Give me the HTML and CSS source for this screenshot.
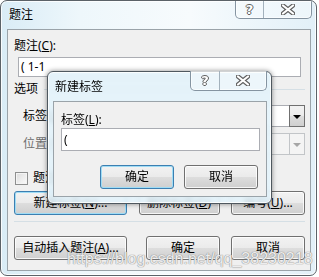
FILE: index.html
```html
<!DOCTYPE html>
<html lang="zh-CN">
<head>
    <meta charset="UTF-8">
    <title>题注</title>
    <link rel="stylesheet" href="styles.css">
</head>
<body>
    <div class="win">
        <div class="bar">
            <span class="title">题注</span>
            <div class="caps">
                <span class="cap cap-help">?</span>
                <span class="cap cap-close">
                    <svg width="14" height="11" viewBox="0 0 14 11"><path d="M2 1.5L12 9.5M12 1.5L2 9.5" stroke="#5e5e5e" stroke-width="4.4" stroke-linecap="round"/><path d="M2 1.5L12 9.5M12 1.5L2 9.5" stroke="#fff" stroke-width="2.2" stroke-linecap="round"/></svg>
                </span>
            </div>
        </div>
        <div class="panel">
            <div class="lbl">题注(<u>C</u>):</div>
            <div class="field cap-field">( 1-1</div>
            <div class="group"><span>选项</span><i class="rule"></i></div>
            <div class="row">
                <span class="row-lbl">标签(<u>L</u>):</span>
                <div class="combo">(<b class="drop"><i class="tri"></i></b></div>
            </div>
            <div class="row row-off">
                <span class="row-lbl">位置(<u>P</u>):</span>
                <div class="combo combo-off"><b class="drop"><i class="tri"></i></b></div>
            </div>
            <div class="check"><i class="box"></i><span>题注中不包含标签(<u>E</u>)</span></div>
            <div class="btns">
                <span class="btn btn-focus w113">新建标签(<u>N</u>)...</span>
                <span class="btn w81">删除标签(<u>D</u>)</span>
                <span class="btn w74">编号(<u>U</u>)...</span>
            </div>
            <div class="sep"></div>
            <div class="btns btns-end">
                <span class="btn w113">自动插入题注(<u>A</u>)...</span>
                <span class="btn w74 push">确定</span>
                <span class="btn w74">取消</span>
            </div>
        </div>

        <div class="dlg">
            <div class="bar dlg-bar">
                <span class="title">新建标签</span>
                <div class="caps">
                    <span class="cap cap-help dlg-help">?</span>
                    <span class="cap cap-close dlg-close">
                        <svg width="14" height="11" viewBox="0 0 14 11"><path d="M2 1.5L12 9.5M12 1.5L2 9.5" stroke="#5e5e5e" stroke-width="4.4" stroke-linecap="round"/><path d="M2 1.5L12 9.5M12 1.5L2 9.5" stroke="#fff" stroke-width="2.2" stroke-linecap="round"/></svg>
                    </span>
                </div>
            </div>
            <div class="dlg-panel">
                <div class="lbl">标签(<u>L</u>):</div>
                <div class="field dlg-field">(</div>
                <div class="dlg-btns">
                    <span class="btn btn-focus w74">确定</span>
                    <span class="btn w74">取消</span>
                </div>
            </div>
        </div>

        <div class="mark">https://blog.csdn.net/qq_38230218</div>
    </div>
</body>
</html>
```

FILE: styles.css
```css
*{
    margin: 0;
    padding: 0;
    box-sizing: border-box;
}
body{
    background: #fff;
    font: 12px/16px "Noto Sans", "Noto Sans CJK SC", sans-serif;
    color: #000;
}
u{
    text-decoration: underline;
    text-underline-offset: 1px;
}

/* outer window */
.win{
    position: relative;
    width: 317px;
    height: 276px;
    border: 1px solid #5b6268;
    border-radius: 7px;
    padding: 0 5px 0 6px;
    background: linear-gradient(90deg, #d9ecf6, #eef7fb 25%, #f7fbfd 60%, #e2f0f8);
    box-shadow: inset 0 0 0 1px rgba(255,255,255,.8);
    overflow: hidden;
}
.bar{
    height: 28px;
    display: flex;
    align-items: flex-start;
}
.title{
    margin: 6px 0 0 2px;
}
.caps{
    display: flex;
    margin: -1px -1px 0 auto;
    height: 19px;
    border: 1px solid #8594a1;
    border-top: none;
    border-radius: 0 0 5px 5px;
    background: rgba(255,255,255,.35);
    box-shadow: inset 0 0 0 1px rgba(255,255,255,.6);
}
.cap{
    display: flex;
    align-items: center;
    justify-content: center;
}
.cap-help{
    width: 27px;
    font: bold 13px/1 "DejaVu Sans", sans-serif;
    color: #fff;
    text-shadow: 1px 0 #5e5e5e, -1px 0 #5e5e5e, 0 1px #5e5e5e, 0 -1px #5e5e5e;
}
.cap-close{
    width: 48px;
    border-left: 1px solid #a3b1bc;
}

/* dialog body */
.panel{
    height: 242px;
    border: 1px solid #9aa3a9;
    background: #f0f0f0;
    padding: 8px 5px 0 6px;
}
.field{
    background: #fff;
    border: 1px solid #abadb3;
    padding-left: 2px;
    display: flex;
    align-items: center;
}
.cap-field{
    height: 20px;
    margin: 3px 4px 0;
}
.group{
    display: flex;
    align-items: center;
    margin-top: 4px;
}
.rule{
    flex: 1;
    height: 1px;
    margin: 1px 0 0 6px;
    background: #d5dfe5;
}
.row{
    display: flex;
    align-items: center;
    margin-top: 8px;
}
.row + .row{
    margin-top: 6px;
}
.row-lbl{
    padding-left: 9px;
}
.row-off .row-lbl{
    color: #6d6d6d;
}
.combo{
    display: flex;
    align-items: center;
    width: 234px;
    height: 22px;
    margin-left: auto;
    padding-left: 3px;
    background: #fff;
    border: 1px solid #abadb3;
}
.drop{
    display: flex;
    align-items: center;
    justify-content: center;
    width: 16px;
    height: 22px;
    margin: 0 -1px 0 auto;
    border: 1px solid #707070;
    background: linear-gradient(#f2f2f2, #ebebeb 50%, #dddddd 50%, #cfcfcf);
}
.tri{
    border: 4px solid transparent;
    border-top: 4px solid #000;
    border-bottom: none;
    margin-top: 1px;
}
.combo-off{
    background: #f4f4f4;
    border-color: #c2c5c8;
}
.combo-off .drop{
    border-color: #c2c5c8;
    background: #f4f4f4;
}
.combo-off .tri{
    border-top-color: #a6a6a6;
}
.check{
    display: flex;
    align-items: center;
    margin-top: 15px;
}
.box{
    width: 13px;
    height: 13px;
    margin: 0 5px 0 1px;
    border: 1px solid #8e8f8f;
    background: linear-gradient(135deg, #dcdcdc, #fbfbfb);
    box-shadow: inset 0 0 0 1px #f4f4f4;
}
.btns{
    display: flex;
    justify-content: space-between;
    margin-top: 5px;
}
.btns-end{
    justify-content: flex-start;
    gap: 11px;
    margin-top: 14px;
}
.push{
    margin-left: auto;
}
.sep{
    height: 1px;
    margin-top: 6px;
    background: #d5dfe5;
}
.btn{
    display: flex;
    align-items: center;
    justify-content: center;
    height: 24px;
    border: 1px solid #707070;
    border-radius: 3px;
    background: linear-gradient(#f2f2f2, #ebebeb 48%, #dddddd 52%, #cfcfcf);
    box-shadow: inset 0 0 0 1px rgba(255,255,255,.8);
    white-space: nowrap;
}
.btn-focus{
    border-color: #3c7fb1;
    box-shadow: inset 0 0 0 1px #9fdcf5;
}
.w113{ width: 113px; }
.w81{ width: 81px; }
.w74{ width: 74px; }

/* new label dialog on top */
.dlg{
    position: absolute;
    left: 46px;
    top: 70px;
    width: 225px;
    height: 133px;
    padding: 0 4px 6px 5px;
    border: 1px solid #4f585f;
    border-radius: 6px;
    background: rgba(226,242,250,.88);
    backdrop-filter: blur(2px);
    box-shadow: 0 0 5px rgba(0,0,0,.45), inset 0 0 0 1px rgba(255,255,255,.8);
}
.dlg-bar{
    height: 29px;
}
.dlg-bar .title{
    margin-top: 7px;
}
.dlg-bar .caps{
    height: 20px;
    margin-right: 0;
}
.dlg-help{
    width: 28px;
}
.dlg-close{
    width: 47px;
}
.dlg-panel{
    height: 96px;
    border: 1px solid #9aa3a9;
    background: #f0f0f0;
    padding: 10px 6px 0 7px;
}
.dlg-field{
    height: 23px;
}
.dlg-btns{
    display: flex;
    justify-content: flex-end;
    gap: 10px;
    margin-top: 14px;
    padding-right: 2px;
}

.mark{
    position: absolute;
    left: 66px;
    top: 249px;
    font: 16px "Liberation Sans", sans-serif;
    color: rgba(255,255,255,.85);
    text-shadow: 0 0 1px #8a8a8a, 0 0 1px #8a8a8a;
    white-space: nowrap;
}
```
